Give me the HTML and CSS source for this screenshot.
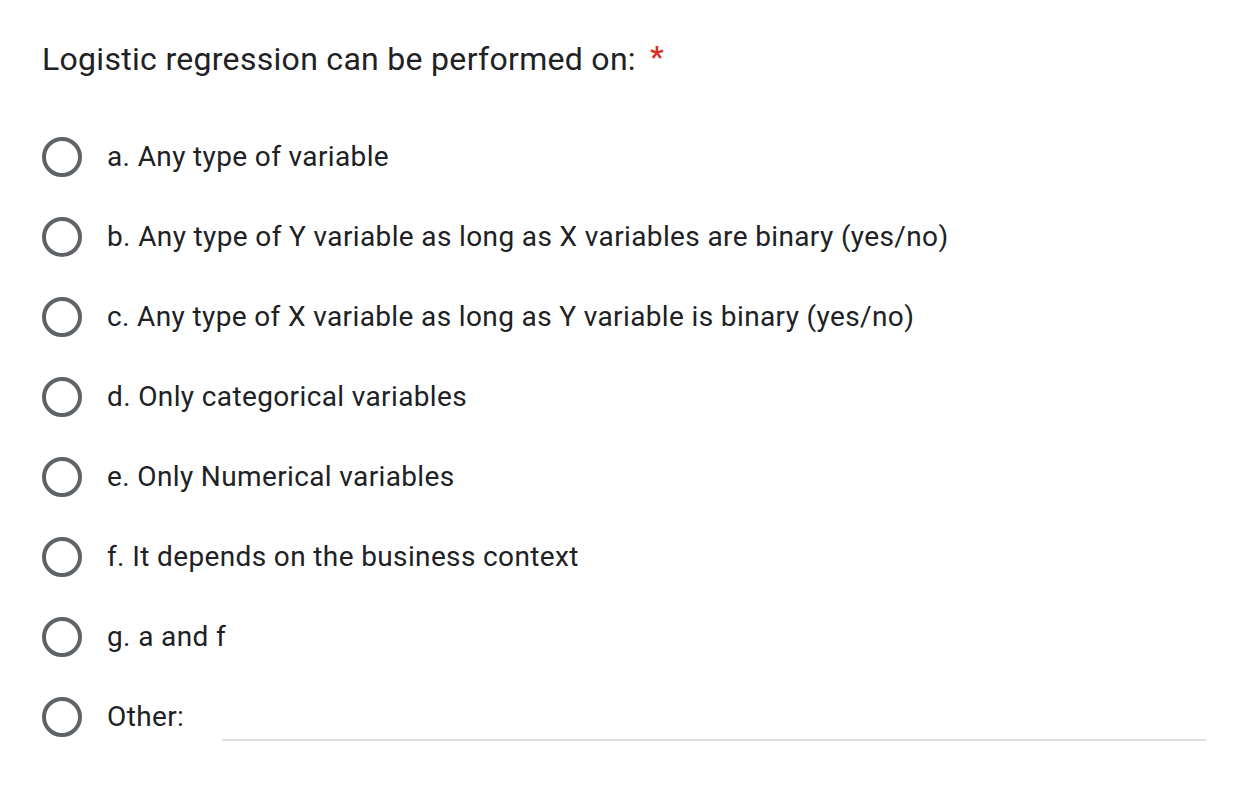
FILE: index.html
```html
<!DOCTYPE html>
<html>
<head>
<meta charset="utf-8">
<link rel="stylesheet" href="styles.css">
</head>
<body>
<div class="question">
  <div class="title">Logistic regression can be performed on:<span class="req">*</span></div>
  <div class="options">
    <div class="option"><span class="radio"></span><span class="label">a. Any type of variable</span></div>
    <div class="option"><span class="radio"></span><span class="label">b. Any type of Y variable as long as X variables are binary (yes/no)</span></div>
    <div class="option"><span class="radio"></span><span class="label">c. Any type of X variable as long as Y variable is binary (yes/no)</span></div>
    <div class="option"><span class="radio"></span><span class="label">d. Only categorical variables</span></div>
    <div class="option"><span class="radio"></span><span class="label">e. Only Numerical variables</span></div>
    <div class="option"><span class="radio"></span><span class="label">f. It depends on the business context</span></div>
    <div class="option"><span class="radio"></span><span class="label">g. a and f</span></div>
    <div class="option other"><span class="radio"></span><span class="label">Other:</span><span class="other-input"></span></div>
  </div>
</div>
</body>
</html>
```

FILE: styles.css
```css
html, body {
  margin: 0;
  padding: 0;
  background: #ffffff;
}
.question {
  padding: 39px 46px 0 42px;
}
.title {
  font-family: Roboto, "Liberation Sans", sans-serif;
  font-size: 32px;
  line-height: 40px;
  color: #202124;
  letter-spacing: 0.3px;
}
.req {
  color: #d93025;
  margin-left: 14px;
  font-size: 30px;
  font-weight: 700;
  position: relative;
  top: -3px;
}
.options {
  margin-top: 37px;
  display: flex;
  flex-direction: column;
}
.option {
  display: flex;
  align-items: center;
  height: 80px;
}
.radio {
  box-sizing: border-box;
  width: 40px;
  height: 40px;
  border: 4px solid #5f6368;
  border-radius: 50%;
  flex: none;
}
.label {
  margin-left: 25px;
  margin-bottom: 1px;
  font-family: Roboto, "Liberation Sans", sans-serif;
  font-size: 28px;
  color: #202124;
  letter-spacing: 0.37px;
}
.other-input {
  flex: 1;
  align-self: flex-end;
  margin-left: 38px;
  margin-bottom: 16px;
  height: 2px;
  background: #e0e0e0;
}
```
